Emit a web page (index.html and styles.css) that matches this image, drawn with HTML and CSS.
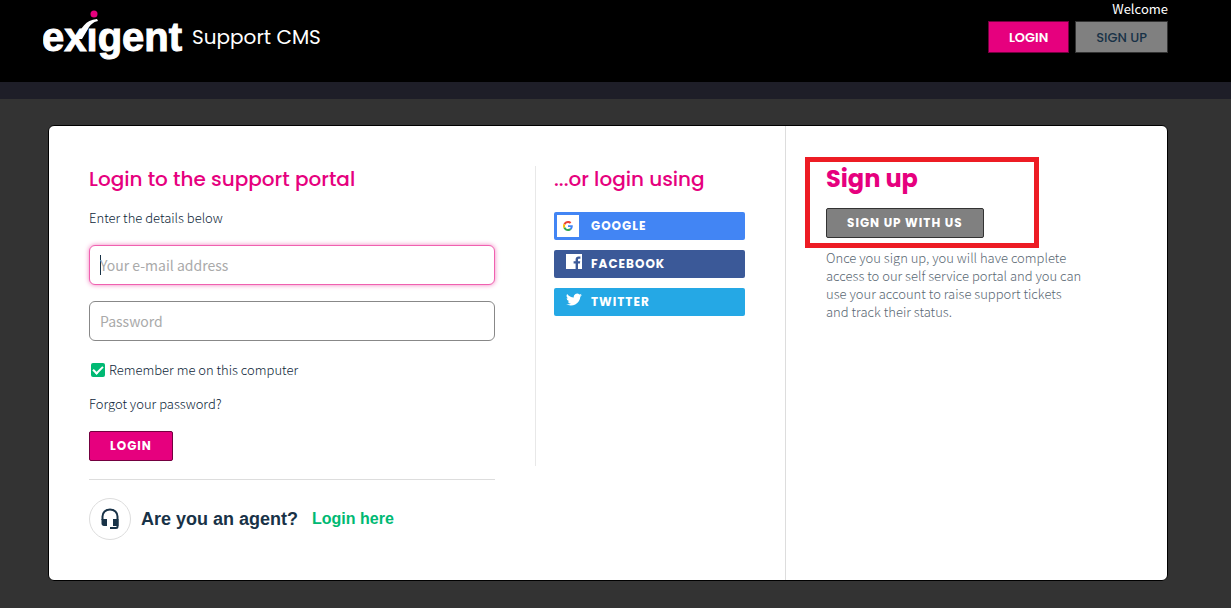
FILE: index.html
```html
<!DOCTYPE html>
<html lang="en">
<head>
    <meta charset="UTF-8">
    <meta name="viewport" content="width=device-width, initial-scale=1.0">
    <title>Exigent - Support CMS</title>
    <link rel="stylesheet" href="styles.css">
</head>
<body>
    <header class="header">
        <a class="brand" href="#">
            <svg class="logo" width="140" height="54" viewBox="0 0 140 54">
                <defs>
                    <linearGradient id="dot" gradientUnits="userSpaceOnUse" x1="0" y1="0" x2="0" y2="54">
                        <stop offset="0.36" stop-color="#000"/>
                        <stop offset="0.36" stop-color="#fff"/>
                    </linearGradient>
                </defs>
                <text x="-1" y="43">ex<tspan fill="url(#dot)" stroke="url(#dot)">i</tspan>gent</text>
                <path d="M32 31 C39 20 42 12 54 11 L55 13 C50 14 47 17 45 21 L39 31Z" fill="#fff"/>
                <circle cx="51" cy="6" r="3.500" fill="#e6007e"/>
            </svg>
            <span class="brand-name">Support CMS</span>
        </a>
        <div class="account">
            <span class="welcome">Welcome</span>
            <div class="account-links">
                <a class="btn btn-pink" href="#">LOGIN</a>
                <a class="btn btn-grey" href="#">SIGN UP</a>
            </div>
        </div>
    </header>
    <div class="strip"></div>

    <main class="card">
        <section class="login-panel">
            <div class="login">
                <form class="login-form">
                    <h2>Login to the support portal</h2>
                    <p class="hint">Enter the details below</p>
                    <input class="field" type="email" placeholder="Your e-mail address" aria-label="Your e-mail address" autofocus>
                    <input class="field" type="password" placeholder="Password" aria-label="Password">
                    <label class="remember"><input type="checkbox" checked>Remember me on this computer</label>
                    <a class="forgot" href="#">Forgot your password?</a>
                    <button class="btn btn-pink btn-round" type="submit">LOGIN</button>
                </form>
                <div class="agent">
                    <span class="agent-icon">
                        <svg width="18" height="22" viewBox="0 0 18 22">
                            <path d="M1.500 12V8.500C1.500 4.500 4.500 1.500 9 1.500s7.500 3 7.500 7V18.500c0 1-.7 1.500-1.500 1.500H9" fill="none" stroke="#183247" stroke-width="2"/>
                            <path d="M.5 11H6v7H3C1.500 18 .5 17 .5 15.500ZM12 11h5.500v7H12Z" fill="#183247"/>
                        </svg>
                    </span>
                    <b>Are you an agent?</b>
                    <a href="#">Login here</a>
                </div>
            </div>
            <div class="social">
                <h2>...or login using</h2>
                <a class="social-btn google" href="#">
                    <span class="google-box">
                        <svg width="10" height="10" viewBox="0 0 48 48">
                            <path fill="#ea4335" d="M24 9.500c3.500 0 6.700 1.200 9.200 3.600l6.900-6.900C35.900 2.400 30.500 0 24 0 14.600 0 6.500 5.400 2.600 13.200l8 6.200C12.400 13.700 17.700 9.500 24 9.500z"/>
                            <path fill="#4285f4" d="M47 24.500c0-1.600-.2-3.100-.4-4.500H24v9h12.900c-.6 3-2.200 5.500-4.700 7.200l7.700 6C44.400 38 47 31.800 47 24.500z"/>
                            <path fill="#fbbc05" d="M10.500 28.600c-.5-1.500-.8-3-.8-4.600s.3-3.100.8-4.600l-8-6.200C.9 16.500 0 20.100 0 24s.9 7.500 2.600 10.800z"/>
                            <path fill="#34a853" d="M24 48c6.500 0 11.900-2.100 15.900-5.800l-7.700-6c-2.200 1.500-4.900 2.300-8.200 2.300-6.300 0-11.600-4.200-13.500-9.900l-8 6.200C6.500 42.600 14.600 48 24 48z"/>
                        </svg>
                    </span>
                    GOOGLE
                </a>
                <a class="social-btn facebook" href="#">
                    <svg class="social-icon" width="16" height="20" viewBox="0 0 16 20">
                        <path d="M0 0h16v15h-4V9.500h1.900l.3-2.300H12V5.800c0-.7.2-1.100 1.200-1.100h1.200V2.600c-.2 0-1-.1-1.800-.1-1.800 0-3 1.100-3 3v1.700h-2v2.300h2V15H0z" fill="#fff"/>
                    </svg>
                    FACEBOOK
                </a>
                <a class="social-btn twitter" href="#">
                    <svg class="social-icon" width="16" height="20" viewBox="0 0 24 30">
                        <path d="M24 4.600a10 10 0 0 1-2.800.8 5 5 0 0 0 2.100-2.700 10 10 0 0 1-3.100 1.200 4.900 4.900 0 0 0-8.400 4.500A14 14 0 0 1 1.700 3.100a4.900 4.900 0 0 0 1.500 6.600 4.900 4.900 0 0 1-2.200-.6 4.900 4.900 0 0 0 3.900 4.900 5 5 0 0 1-2.200.1 4.900 4.900 0 0 0 4.600 3.400A10 10 0 0 1 0 18a14 14 0 0 0 21.500-11A10 10 0 0 0 24 4.600z" fill="#fff"/>
                    </svg>
                    TWITTER
                </a>
            </div>
        </section>
        <section class="signup-panel">
            <div class="highlight"></div>
            <h1>Sign up</h1>
            <a class="btn btn-grey btn-round btn-signup" href="#">SIGN UP WITH US</a>
            <p>Once you sign up, you will have complete access to our self service portal and you can use your account to raise support tickets and track their status.</p>
        </section>
    </main>
</body>
</html>
```
FILE: styles.css
```css
* { margin: 0; padding: 0; box-sizing: border-box; }

body {
    background: #333;
    color: #0c2638;
    font-family: "Source Sans Pro", "Noto Sans CJK SC", sans-serif;
    font-size: 13px;
    font-weight: 300;
    line-height: 18px;
}

a {
    color: inherit;
    text-decoration: none;
}

h1, h2, .btn, .brand-name, .social-btn {
    font-family: Poppins, Inter, sans-serif;
}

h1, h2 {
    color: #e6007e;
    line-height: 26px;
}
h1 { font-size: 24px; font-weight: 700; }
h2 { font-size: 20px; font-weight: 500; }

/* header */
.header {
    display: flex;
    justify-content: space-between;
    background: #000;
    height: 82px;
    padding: 0 63px 0 43px;
}

.brand {
    display: flex;
    gap: 9px;
    padding-top: 8px;
    color: #fff;
}

.logo text {
    fill: #fff;
    stroke: #fff;
    stroke-width: 1;
    font-family: "Liberation Sans", Arial, sans-serif;
    font-size: 40px;
    font-weight: 700;
}

.brand-name {
    font-size: 20px;
    font-weight: 400;
    line-height: 58px;
}

.account {
    display: flex;
    flex-direction: column;
    align-items: flex-end;
    gap: 3px;
}
.welcome {
    color: #fff;
    font-weight: 400;
}
.account-links {
    display: flex;
    gap: 6px;
}
.account-links .btn {
    font-size: 13px;
    font-weight: 600;
    line-height: 31px;
    letter-spacing: 0;
}
.account-links .btn-grey {
    color: #183247;
    font-weight: 500;
}

.strip {
    height: 17px;
    background: #1e1e28;
}

/* buttons */
.btn {
    display: block;
    height: 30px;
    padding: 0 20px;
    border: 1px solid #333;
    font-size: 12px;
    font-weight: 700;
    line-height: 28px;
    letter-spacing: 1px;
    color: #fff;
    cursor: pointer;
}
.btn-pink {
    background: #e6007e;
    border-color: #73003f;
}
.btn-grey { background: #808080; }
.btn-round { border-radius: 2px; }
.account-links .btn { height: 32px; }

/* card */
.card {
    display: grid;
    grid-template-columns: 737fr 381fr;
    margin: 26px 63px 27px 48px;
    background: #fff;
    border: 1px solid #000;
    border-radius: 6px;
}

.login-panel {
    display: grid;
    grid-template-columns: 406fr 210fr;
    column-gap: 40px;
    padding: 40px;
    border-right: 1px solid #ddd;
}

.login-form {
    display: flex;
    flex-direction: column;
    align-items: flex-start;
}
.hint { margin: 17px 0 18px; }

.field {
    width: 100%;
    height: 40px;
    margin-bottom: 16px;
    padding: 0 10px;
    border: 1px solid #888;
    border-radius: 6px;
    background: #fff;
    color: #183247;
    font-family: inherit;
    font-size: 14px;
}
.field::placeholder { color: #aaa; }
.field:focus {
    outline: none;
    border-color: #f060b0;
    box-shadow: 0 0 5px #f080be;
}
.field:focus:placeholder-shown {
    background: linear-gradient(#183247, #183247) 10px center / 1px 20px no-repeat #fff;
    caret-color: transparent;
}

.remember {
    display: flex;
    align-items: center;
    gap: 4px;
    margin: 4px 0 16px 2px;
}
.remember input {
    appearance: none;
    display: grid;
    place-items: center;
    width: 14px;
    height: 14px;
    border-radius: 2px;
    background: #00b973;
}
.remember input:checked::before {
    content: "";
    width: 8px;
    height: 4px;
    margin-bottom: 2px;
    border: solid #fff;
    border-width: 0 0 2px 2px;
    transform: rotate(-45deg);
}

.forgot { margin-bottom: 18px; }

.agent {
    display: flex;
    align-items: center;
    margin-top: 18px;
    padding-top: 18px;
    border-top: 1px solid #ddd;
    font-family: "Liberation Sans", Arial, sans-serif;
}
.agent-icon {
    display: grid;
    place-items: center;
    width: 42px;
    height: 42px;
    margin-right: 10px;
    border: 1px solid #ddd;
    border-radius: 50%;
}
.agent b {
    color: #183247;
    font-size: 18px;
    font-weight: 700;
}
.agent a {
    margin-left: 14px;
    color: #00b973;
    font-size: 16px;
    font-weight: 700;
}

.social {
    display: flex;
    flex-direction: column;
    align-self: start;
    gap: 10px;
    min-height: 300px;
    padding-left: 18px;
    border-left: 1px solid #e8e8e8;
}
.social h2 { margin-bottom: 10px; }

.social-btn {
    display: flex;
    align-items: center;
    gap: 9px;
    height: 28px;
    padding-left: 12px;
    border-radius: 2px;
    color: #fff;
    font-size: 12px;
    font-weight: 700;
    letter-spacing: 1px;
}
.google {
    gap: 12px;
    padding-left: 3px;
    background: #4285f4;
}
.google-box {
    display: grid;
    place-items: center;
    width: 22px;
    height: 22px;
    background: #fff;
}
.facebook { background: #3b5998; }
.twitter { background: #25a8e5; }

/* sign up */
.signup-panel {
    position: relative;
    padding: 40px;
}
.signup-panel p {
    max-width: 258px;
    margin-top: 11px;
    color: #5a6873;
}
.btn-signup {
    width: fit-content;
    margin-top: 16px;
}

.highlight {
    position: absolute;
    top: 31px;
    left: 19px;
    width: 234px;
    height: 91px;
    border: 5px solid #ed1c24;
}
```
